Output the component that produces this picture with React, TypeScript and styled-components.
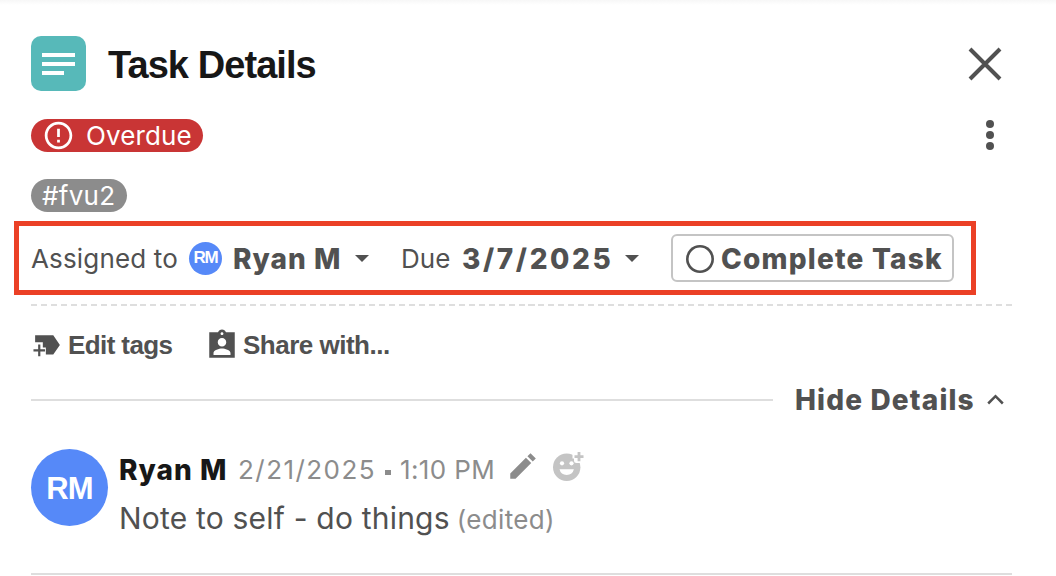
import React from "react";
import styled, {createGlobalStyle} from "styled-components";
import {MdErrorOutline} from "react-icons/md";

type TextProps = {
    $size?: number;
    $spacing?: number;
    $color?: string;
};

const App = () => {
    return (
        <>
            <GlobalStyle/>
            <Panel>
                <Header>
                    <TaskBadge>
                        <TaskLine $width={33}/>
                        <TaskLine $width={33}/>
                        <TaskLine $width={22}/>
                    </TaskBadge>
                    <Title>Task Details</Title>
                    <CloseIcon viewBox="0 0 34 34">
                        <path d="M2 2 32 32M32 2 2 32"/>
                    </CloseIcon>
                </Header>

                <StatusRow>
                    <OverduePill>
                        <MdErrorOutline size={33}/>
                        <PillText $color="#fff" $spacing={0.1}>Overdue</PillText>
                    </OverduePill>
                    <MoreButton>
                        <Dot/>
                        <Dot/>
                        <Dot/>
                    </MoreButton>
                </StatusRow>

                <TagPill>
                    <PillText $color="#fff" $spacing={0.3}>#fvu2</PillText>
                </TagPill>

                <Assignment>
                    <Text $spacing={0.15}>Assigned to</Text>
                    <SmallAvatar>RM</SmallAvatar>
                    <Assignee $spacing={1}>Ryan M</Assignee>
                    <Caret/>
                    <DueLabel>Due</DueLabel>
                    <WideText $spacing={2.6}>3/7/2025</WideText>
                    <Caret/>
                    <CompleteButton>
                        <Circle/>
                        <WideText $spacing={1.2}>Complete Task</WideText>
                    </CompleteButton>
                </Assignment>

                <DashedRule/>

                <Actions>
                    <Action $width={174}>
                        <ActionIcon $size={33} viewBox="0 0 24 24">
                            <path d="M3 4.6h13.2L21 11.6l-4.8 7h-5.4v-5.2H8.6V9.6H3z"/>
                            <path d="M5.2 11.2h1.6v3.5h3.4v1.6H6.8v3.5H5.2v-3.5H1.8v-1.6h3.4z"/>
                        </ActionIcon>
                        <ActionText $spacing={-0.6}>Edit tags</ActionText>
                    </Action>
                    <Action $width={190}>
                        <ActionIcon $size={34} viewBox="0 0 24 24">
                            <path d="M21 3h-6.18C14.4 1.84 13.3 1 12 1s-2.4.84-2.82 2H3v18h18V3zm-9 0c.55 0 1 .45 1 1s-.45 1-1 1-1-.45-1-1 .45-1 1-1zm0 4c1.66 0 3 1.34 3 3s-1.34 3-3 3-3-1.34-3-3 1.34-3 3-3zm6 12H6v-1.4c0-2 4-3.1 6-3.1s6 1.1 6 3.1V19z"/>
                        </ActionIcon>
                        <ActionText $spacing={-0.5}>Share with...</ActionText>
                    </Action>
                </Actions>

                <DetailsToggle>
                    <Rule/>
                    <WideText $spacing={1.15}>Hide Details</WideText>
                    <Chevron viewBox="0 0 17 11">
                        <path d="M1.2 9.5 8.5 2.2l7.3 7.3"/>
                    </Chevron>
                </DetailsToggle>

                <Comment>
                    <Avatar>RM</Avatar>
                    <CommentBody>
                        <CommentMeta>
                            <Author $color="#171717" $spacing={1}>Ryan M</Author>
                            <PostedDate $color="#8c8c8c" $spacing={1.45}>2/21/2025</PostedDate>
                            <Bullet/>
                            <PostedTime $color="#8c8c8c" $spacing={0.4}>1:10 PM</PostedTime>
                            <PencilIcon viewBox="0 0 24 24">
                                <path d="M3 17.25V21h3.75L17.81 9.94l-3.75-3.75zM15.13 5.12 17.3 2.95 21.05 6.7l-2.17 2.17z"/>
                            </PencilIcon>
                            <ReactionIcon viewBox="0 0 32 32">
                                <circle cx="14.7" cy="17.3" r="13.7"/>
                                <circle cx="10" cy="13.3" r="2.1" fill="#fff"/>
                                <circle cx="19.5" cy="13.3" r="2.1" fill="#fff"/>
                                <path d="M7.5 19.2h14.4a7.4 7.4 0 0 1-14.4 0z" fill="#fff"/>
                                <path d="M20.5 0H32v13h-7.5a2.5 2.5 0 0 1-2.5-2.5V8.5h-1.5z" fill="#fff"/>
                                <path d="M25.6 2h2.8v3.3h3.1v2.8h-3.1v3.1h-2.8V8.1h-3.1V5.3h3.1z"/>
                            </ReactionIcon>
                        </CommentMeta>
                        <CommentText>
                            <Text $size={30} $spacing={0.2}>Note to self - do things</Text>
                            <Text $color="#8c8c8c" $spacing={0.35}>(edited)</Text>
                        </CommentText>
                    </CommentBody>
                </Comment>

                <BottomRule/>
            </Panel>
        </>
    )
}

export default App;


const GlobalStyle = createGlobalStyle`
  * {
    box-sizing: border-box;
  }

  body {
    margin: 0;
    background: #fff;
    color: #515151;
    font-family: "Liberation Sans", Arial, sans-serif;
  }
`

const Panel = styled.div`
  display: flex;
  flex-direction: column;
  width: 1056px;
  height: 576px;
  padding: 36px 44px 0 31px;
  overflow: hidden;
  background: linear-gradient(#f7f7f7, #fff 5px);
`

const Text = styled.span<TextProps>`
  color: ${({$color}) => $color || "#515151"};
  font-family: Inter, sans-serif;
  font-size: ${({$size}) => $size || 26}px;
  font-weight: 400;
  font-optical-sizing: none;
  letter-spacing: ${({$spacing}) => $spacing || 0}px;
  line-height: 34px;
  white-space: nowrap;
`

const WideText = styled(Text)`
  font-size: 28px;
  font-weight: 800;
`

const PillText = styled(Text)`
  padding-top: 1px;
`

const ActionText = styled(Text)`
  margin-left: 1px;
  font-family: "Liberation Sans", Arial, sans-serif;
  font-weight: 700;
`

const Header = styled.header`
  display: flex;
  align-items: center;
  height: 55px;
`

const TaskBadge = styled.div`
  display: flex;
  flex-direction: column;
  justify-content: center;
  gap: 5px;
  width: 55px;
  height: 55px;
  padding: 1px 0 0 11px;
  border-radius: 10px;
  background: #57b9b9;
`

const TaskLine = styled.div<{$width: number}>`
  width: ${({$width}) => $width}px;
  height: 4px;
  background: #fff;
`

const Title = styled.h1`
  margin: 3px auto 0 22px;
  color: #171717;
  font-size: 38px;
  font-weight: 700;
  letter-spacing: -0.93px;
  line-height: 44px;
`

const CloseIcon = styled.svg`
  width: 34px;
  height: 34px;
  margin-right: 10.5px;
  fill: none;
  stroke: #515151;
  stroke-width: 4;
`

const StatusRow = styled.div`
  display: flex;
  align-items: center;
  justify-content: space-between;
  height: 33px;
  margin-top: 28px;
`

const OverduePill = styled.div`
  display: flex;
  align-items: center;
  gap: 11px;
  width: 172px;
  height: 33px;
  padding-left: 11px;
  border-radius: 17px;
  background: #c93535;
  color: #fff;
`

const MoreButton = styled.div`
  display: flex;
  flex-direction: column;
  gap: 3px;
  margin: -1px 18px 0 0;
`

const Dot = styled.span`
  width: 8px;
  height: 8px;
  border-radius: 50%;
  background: #515151;
`

const TagPill = styled.div`
  display: flex;
  align-items: center;
  width: 96px;
  height: 33px;
  margin-top: 27px;
  padding-left: 11px;
  border-radius: 17px;
  background: #8c8c8c;
`

const Assignment = styled.section`
  display: grid;
  grid-template-columns: 158px 33px 133px 14px 93px 163px 14px 1fr;
  align-items: center;
  width: 962px;
  height: 74px;
  margin: 9px 0 0 -17px;
  padding: 1px 17px 0 12px;
  border: 5px solid #eb4026;
`

const SmallAvatar = styled.div`
  width: 33px;
  height: 33px;
  border-radius: 50%;
  background: #5689f8;
  color: #fff;
  font-size: 17px;
  font-weight: 700;
  letter-spacing: -1.2px;
  line-height: 32px;
  text-align: center;
`

const Assignee = styled(WideText)`
  padding-left: 11px;
`

const DueLabel = styled(Text)`
  padding-left: 32px;
`

const Caret = styled.span`
  width: 14px;
  height: 7px;
  background: #515151;
  clip-path: polygon(0 0, 100% 0, 50% 100%);
`

const CompleteButton = styled.button`
  display: flex;
  align-items: center;
  gap: 7px;
  width: 283px;
  height: 48px;
  margin: -1px 0 0 32px;
  padding: 1px 0 0 13px;
  border: 2px solid #c4c4c4;
  border-radius: 6px;
  background: #fff;
`

const Circle = styled.span`
  flex: none;
  width: 28px;
  height: 28px;
  border-radius: 50%;
  box-shadow: inset 0 0 0 2.6px #515151;
`

const DashedRule = styled.div`
  height: 2px;
  margin-top: 9px;
  background: repeating-linear-gradient(90deg, #dedede 0 6px, transparent 6px 9.95px);
`

const Actions = styled.div`
  display: flex;
  align-items: center;
  height: 34px;
  margin-top: 22px;
`

const Action = styled.div<{$width: number}>`
  display: flex;
  align-items: center;
  gap: 3px;
  width: ${({$width}) => $width}px;
`

const ActionIcon = styled.svg<{$size: number}>`
  flex: none;
  width: ${({$size}) => $size}px;
  height: ${({$size}) => $size}px;
  fill: #515151;
`

const DetailsToggle = styled.div`
  display: flex;
  align-items: center;
  height: 40px;
  margin-top: 18px;
`

const Rule = styled.div`
  width: 742px;
  height: 2px;
  margin-right: 22px;
  background: #dedede;
`

const Chevron = styled.svg`
  width: 17px;
  height: 11px;
  margin: -2px 0 0 12px;
  fill: none;
  stroke: #515151;
  stroke-width: 2.5;
`

const Comment = styled.article`
  display: flex;
  height: 95px;
  margin-top: 29px;
`

const Avatar = styled.div`
  width: 77px;
  height: 77px;
  border-radius: 50%;
  background: #5689f8;
  color: #fff;
  font-size: 31px;
  font-weight: 700;
  letter-spacing: -0.8px;
  line-height: 79px;
  text-align: center;
`

const CommentBody = styled.div`
  display: flex;
  flex-direction: column;
  padding-left: 11px;
`

const CommentMeta = styled.div`
  display: flex;
  align-items: center;
  height: 42px;
`

const Author = styled(WideText)`
  width: 119px;
`

const PostedDate = styled(Text)`
  width: 139px;
`

const Bullet = styled.span`
  width: 6px;
  height: 5px;
  margin: 4px 9px 0 8px;
  background: #8c8c8c;
`

const PostedTime = styled(Text)`
  width: 106px;
`

const PencilIcon = styled.svg`
  width: 34px;
  height: 34px;
  margin-top: -8px;
  fill: #8c8c8c;
`

const ReactionIcon = styled.svg`
  width: 32px;
  height: 32px;
  margin: -9px 0 0 12px;
  fill: #c4c4c4;
`

const CommentText = styled.div`
  display: flex;
  align-items: baseline;
  gap: 7px;
  margin-top: 10px;
`

const BottomRule = styled.div`
  height: 2px;
  margin-top: 29px;
  background: #dedede;
`
